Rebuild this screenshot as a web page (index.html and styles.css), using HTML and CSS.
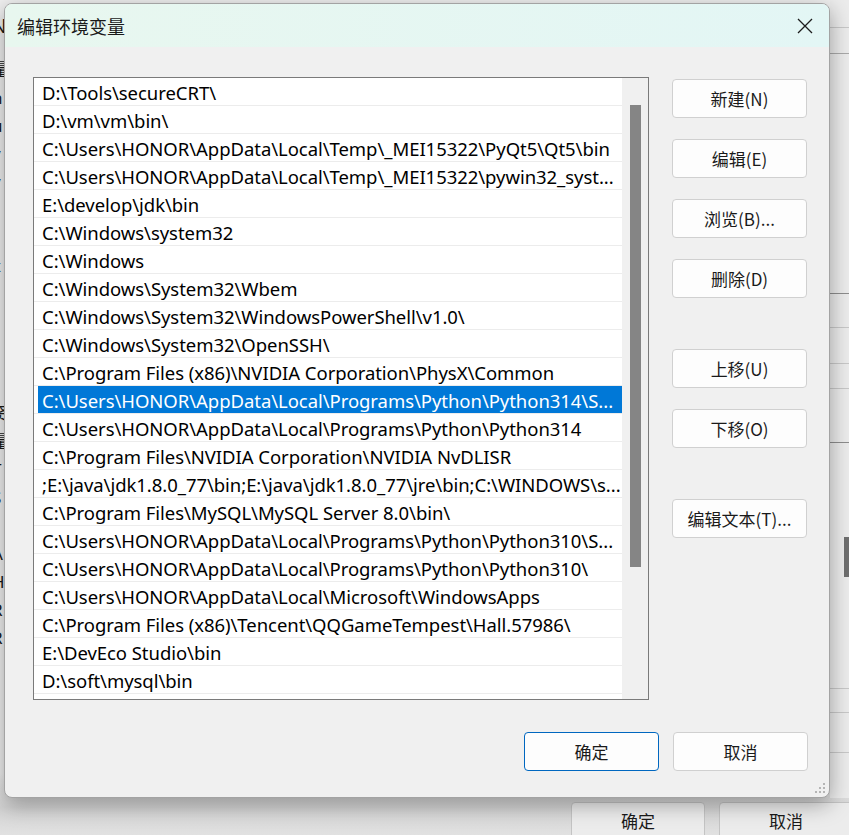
FILE: index.html
```html
<!DOCTYPE html>
<html lang="zh-CN">
<head>
<meta charset="UTF-8">
<title>编辑环境变量</title>
<link rel="stylesheet" href="styles.css">
</head>
<body>
<div class="desktop">
  <!-- window behind the dialog -->
  <div class="back-window">
    <div class="back-main">
      <div class="back-left">
        <div class="back-line big">N</div>
        <div class="back-line gap">量</div>
        <div class="back-line">n</div>
        <div class="back-line">u</div>
        <div class="back-line">v</div>
        <div class="back-line">v</div>
        <div class="back-line">I</div>
        <div class="back-line">/</div>
        <div class="back-line">x</div>
        <div class="back-line gap2">贤</div>
        <div class="back-line">量</div>
        <div class="back-line">T</div>
        <div class="back-line">S</div>
        <div class="back-line">t</div>
        <div class="back-line">A</div>
        <div class="back-line">H</div>
        <div class="back-line">R</div>
        <div class="back-line">R</div>
      </div>
      <div class="back-right">
        <div class="back-rule r1"></div>
        <div class="back-rule r2"></div>
        <div class="back-rule r3"></div>
        <div class="back-rule r4"></div>
        <div class="back-rule r5"></div>
        <div class="back-rule r6"></div>
        <div class="back-rule r7"></div>
        <div class="back-rule r8"></div>
        <div class="back-rule r9"></div>
        <div class="back-rule r10"></div>
        <div class="back-thumb"></div>
      </div>
    </div>
    <div class="back-footer">
      <div class="back-btn">确定</div>
      <div class="back-btn">取消</div>
    </div>
  </div>

  <div class="dialog">
    <div class="titlebar">
      <span class="title">编辑环境变量</span>
      <svg class="close" width="16" height="16" viewBox="0 0 16 16">
        <path d="M1 1 L15 15 M15 1 L1 15" stroke="#1c1c1c" stroke-width="1.3" fill="none"/>
      </svg>
    </div>

    <div class="dialog-body">
      <div class="main-row">
        <div class="listbox">
          <div class="rows">
            <div class="row"><div class="cell">D:\Tools\secureCRT\</div></div>
            <div class="row"><div class="cell">D:\vm\vm\bin\</div></div>
            <div class="row"><div class="cell">C:\Users\HONOR\AppData\Local\Temp\_MEI15322\PyQt5\Qt5\bin</div></div>
            <div class="row"><div class="cell">C:\Users\HONOR\AppData\Local\Temp\_MEI15322\pywin32_syst...</div></div>
            <div class="row"><div class="cell">E:\develop\jdk\bin</div></div>
            <div class="row"><div class="cell">C:\Windows\system32</div></div>
            <div class="row"><div class="cell">C:\Windows</div></div>
            <div class="row"><div class="cell">C:\Windows\System32\Wbem</div></div>
            <div class="row"><div class="cell">C:\Windows\System32\WindowsPowerShell\v1.0\</div></div>
            <div class="row"><div class="cell">C:\Windows\System32\OpenSSH\</div></div>
            <div class="row"><div class="cell">C:\Program Files (x86)\NVIDIA Corporation\PhysX\Common</div></div>
            <div class="row"><div class="cell selected">C:\Users\HONOR\AppData\Local\Programs\Python\Python314\S...</div></div>
            <div class="row"><div class="cell">C:\Users\HONOR\AppData\Local\Programs\Python\Python314</div></div>
            <div class="row"><div class="cell">C:\Program Files\NVIDIA Corporation\NVIDIA NvDLISR</div></div>
            <div class="row"><div class="cell">;E:\java\jdk1.8.0_77\bin;E:\java\jdk1.8.0_77\jre\bin;C:\WINDOWS\s...</div></div>
            <div class="row"><div class="cell">C:\Program Files\MySQL\MySQL Server 8.0\bin\</div></div>
            <div class="row"><div class="cell">C:\Users\HONOR\AppData\Local\Programs\Python\Python310\S...</div></div>
            <div class="row"><div class="cell">C:\Users\HONOR\AppData\Local\Programs\Python\Python310\</div></div>
            <div class="row"><div class="cell">C:\Users\HONOR\AppData\Local\Microsoft\WindowsApps</div></div>
            <div class="row"><div class="cell">C:\Program Files (x86)\Tencent\QQGameTempest\Hall.57986\</div></div>
            <div class="row"><div class="cell">E:\DevEco Studio\bin</div></div>
            <div class="row"><div class="cell">D:\soft\mysql\bin</div></div>
          </div>
          <div class="scrollbar">
            <div class="thumb"></div>
          </div>
        </div>

        <div class="side-buttons">
          <button class="btn">新建(N)</button>
          <button class="btn">编辑(E)</button>
          <button class="btn">浏览(B)...</button>
          <button class="btn">删除(D)</button>
          <button class="btn group">上移(U)</button>
          <button class="btn">下移(O)</button>
          <button class="btn group">编辑文本(T)...</button>
        </div>
      </div>

      <div class="footer">
        <button class="btn primary">确定</button>
        <button class="btn">取消</button>
      </div>
    </div>

    <svg class="grip" width="11" height="11" viewBox="0 0 11 11">
      <rect x="8" y="0" width="2" height="2" fill="#b5b5b5"/>
      <rect x="4" y="4" width="2" height="2" fill="#b5b5b5"/>
      <rect x="8" y="4" width="2" height="2" fill="#b5b5b5"/>
      <rect x="0" y="8" width="2" height="2" fill="#b5b5b5"/>
      <rect x="4" y="8" width="2" height="2" fill="#b5b5b5"/>
      <rect x="8" y="8" width="2" height="2" fill="#b5b5b5"/>
    </svg>
  </div>
</div>
</body>
</html>
```

FILE: styles.css
```css
html, body {
  margin: 0;
  padding: 0;
  overflow: hidden;
}

body {
  font-family: 'Noto Sans', 'Noto Sans CJK SC', sans-serif;
  background-color: #e8e8e8;
  color: #000000;
}

.desktop {
  position: relative;
  width: 849px;
  height: 835px;
  overflow: hidden;
}

/* window behind */
.back-window {
  height: 841px;
  display: flex;
  flex-direction: column;
  background: linear-gradient(to bottom, #f0f0f0 0%, #f0f0f0 92%, #d4d4d4 96%, #e4e4e4 100%);
}

.back-main {
  flex: 1;
  display: flex;
  justify-content: space-between;
}

.back-left {
  margin-left: -8px;
  padding-top: 12px;
  font-size: 17px;
  color: #1a1a1a;
}

.back-line {
  height: 28px;
  line-height: 28px;
}

.back-line.big {
  height: 40px;
  font-size: 19px;
}

.back-line.gap {
  margin-top: 4px;
}

.back-line.gap2 {
  margin-top: 120px;
}

.back-right {
  position: relative;
  width: 19px;
  background: #ececec;
}

.back-rule {
  position: absolute;
  left: 0;
  right: 0;
  height: 1px;
  background: #c8c8c8;
}

.r1 { top: 27px; }
.r2 { top: 53px; background: #a9a9a9; }
.r3 { top: 293px; background: #8d8d8d; }
.r4 { top: 327px; }
.r5 { top: 363px; }
.r6 { top: 388px; }
.r7 { top: 442px; background: #8d8d8d; }
.r8 { top: 688px; }
.r9 { top: 712px; }
.r10 { top: 752px; }

.back-thumb {
  position: absolute;
  top: 537px;
  left: 14px;
  width: 5px;
  height: 40px;
  background: #6f6f6f;
}

.back-footer {
  display: flex;
  justify-content: flex-end;
  gap: 14px;
  margin-right: -4px;
  padding-top: 4px;
}

.back-btn {
  width: 132px;
  height: 37px;
  line-height: 37px;
  text-align: center;
  font-size: 17px;
  color: #1a1a1a;
  background: #ececec;
  border: 1px solid #c4c4c4;
  border-radius: 4px;
}

/* the dialog */
.dialog {
  position: absolute;
  left: 4px;
  top: 3px;
  width: 824px;
  height: 793px;
  display: flex;
  flex-direction: column;
  background-color: #f0f0f0;
  border: 1px solid #a3a3a3;
  border-radius: 8px;
  box-shadow: 0 6px 22px rgba(0, 0, 0, 0.35);
  overflow: hidden;
}

.titlebar {
  height: 43px;
  display: flex;
  align-items: center;
  justify-content: space-between;
  background: linear-gradient(to right, #e8f7ef, #e3f6f5);
}

.title {
  padding-left: 12px;
  font-family: 'Noto Sans CJK SC', sans-serif;
  font-size: 18px;
  color: #1a1a1a;
}

.close {
  margin-right: 16px;
}

.dialog-body {
  flex: 1;
  padding: 30px 21px 0 28px;
}

.main-row {
  display: flex;
  gap: 23px;
}

.listbox {
  width: 614px;
  height: 621px;
  display: flex;
  background-color: #ffffff;
  border: 1px solid #7a7a7a;
  overflow: hidden;
}

.rows {
  flex: 1;
  min-width: 0;
}

.row {
  height: 27px;
  padding-left: 4px;
  border-bottom: 1px solid #ececec;
}

.cell {
  height: 27px;
  line-height: 29px;
  padding-left: 4px;
  font-size: 18.5px;
  letter-spacing: -0.05px;
  white-space: nowrap;
  overflow: hidden;
}

.cell.selected {
  background-color: #0078d7;
  color: #ffffff;
}

.scrollbar {
  width: 26px;
  padding-top: 27px;
  background-color: #f0f0f0;
  display: flex;
  justify-content: center;
}

.thumb {
  width: 11px;
  height: 462px;
  background-color: #858585;
}

.side-buttons {
  display: flex;
  flex-direction: column;
  gap: 21px;
  padding-top: 2px;
}

.btn {
  width: 135px;
  height: 39px;
  padding: 0;
  font-family: 'Noto Sans CJK SC', sans-serif;
  font-size: 17px;
  color: #1a1a1a;
  background-color: #fdfdfd;
  border: 1px solid #d0d0d0;
  border-radius: 4px;
}

.btn.group {
  margin-top: 30px;
}

.btn.primary {
  border-color: #0067c0;
}

.footer {
  display: flex;
  justify-content: flex-end;
  gap: 14px;
  margin-top: 32px;
}

.grip {
  position: absolute;
  right: 3px;
  bottom: 3px;
}
```
